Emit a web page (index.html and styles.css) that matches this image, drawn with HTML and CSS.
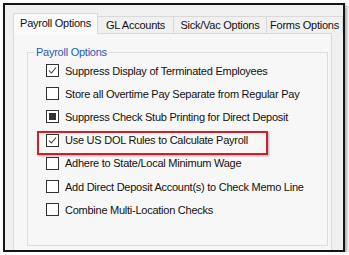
FILE: index.html
```html
<!DOCTYPE html>
<html lang="en">
<head>
    <meta charset="UTF-8">
    <title>Payroll Options</title>
    <link rel="stylesheet" href="styles.css">
</head>
<body>
    <div class="frame">
        <div class="tabs">
            <div class="tab active">Payroll Options</div>
            <div class="tab tab-gl">GL Accounts</div>
            <div class="tab tab-sick">Sick/Vac Options</div>
            <div class="tab tab-forms">Forms Options</div>
        </div>
        <div class="panel">
            <fieldset class="group">
                <legend>Payroll Options</legend>
                <div class="row"><span class="box checked"><svg viewBox="0 0 13 13"><polyline points="2.3,6.5 5.2,9.5 10.7,3"/></svg></span>Suppress Display of Terminated Employees</div>
                <div class="row"><span class="box"></span>Store all Overtime Pay Separate from Regular Pay</div>
                <div class="row"><span class="box mixed"></span>Suppress Check Stub Printing for Direct Deposit</div>
                <div class="row marked"><span class="box checked"><svg viewBox="0 0 13 13"><polyline points="2.3,6.5 5.2,9.5 10.7,3"/></svg></span>Use US DOL Rules to Calculate Payroll<span class="highlight"></span></div>
                <div class="row"><span class="box"></span>Adhere to State/Local Minimum Wage</div>
                <div class="row"><span class="box"></span>Add Direct Deposit Account(s) to Check Memo Line</div>
                <div class="row"><span class="box"></span>Combine Multi-Location Checks</div>
            </fieldset>
        </div>
    </div>
</body>
</html>
```

FILE: styles.css
```css
body {
    margin: 0;
    background: #fff;
    font-family: "Liberation Sans", Arial, sans-serif;
    font-size: 11px;
    letter-spacing: -0.25px;
    color: #111;
}

.frame {
    margin: 3px 0 0 3px;
    width: 330px;
    height: 237px;
    padding: 8px 0 0 8px;
    border: 2px solid #151515;
    background: #f0f0f0;
    box-shadow: 2px 2px 3px rgba(0, 0, 0, 0.35);
    overflow: hidden;
}

.tabs {
    display: flex;
    align-items: flex-end;
    height: 20px;
}

.tab {
    height: 16px;
    line-height: 16px;
    border: 1px solid #d9d9d9;
    border-left: none;
    border-bottom: none;
    background: #f0f0f0;
    text-align: center;
    box-sizing: content-box;
}

.tab.active {
    height: 20px;
    line-height: 18px;
    width: 83px;
    border-left: 1px solid #d9d9d9;
    background: #fbfbfb;
    position: relative;
    z-index: 1;
    margin-bottom: -1px;
}

.tab-gl { width: 75px; }
.tab-sick { width: 92px; }
.tab-forms { width: 75px; }

.panel {
    width: 319px;
    height: 230px;
    border: 1px solid #d9d9d9;
    background: #f7f7f7;
    padding: 0 0 0 13px;
    box-sizing: border-box;
}

.group {
    margin: 12px 0 0 0;
    width: 301px;
    height: 200px;
    box-sizing: border-box;
    border: 1px solid #dcdcdc;
    padding: 1px 0 0 18px;
}

.group legend {
    margin-left: -12px;
    padding: 0 2px;
    color: #1e5bbd;
    font-size: 11px;
}

.row {
    position: relative;
    display: flex;
    align-items: center;
    height: 23.2px;
    white-space: nowrap;
}

.box {
    width: 11px;
    height: 11px;
    border: 1px solid #333;
    background: #fff;
    margin-right: 6px;
    flex: none;
    display: flex;
    align-items: center;
    justify-content: center;
}

.box svg {
    width: 11px;
    height: 11px;
    fill: none;
    stroke: #333;
    stroke-width: 1.2;
}

.box.mixed::after {
    content: "";
    width: 7px;
    height: 7px;
    background: #333;
}

.highlight {
    position: absolute;
    left: -9px;
    top: 2.5px;
    width: 227px;
    height: 20px;
    border: 2px solid #d01f26;
    box-shadow: 1px 1px 2px rgba(0, 0, 0, 0.3);
}
```
